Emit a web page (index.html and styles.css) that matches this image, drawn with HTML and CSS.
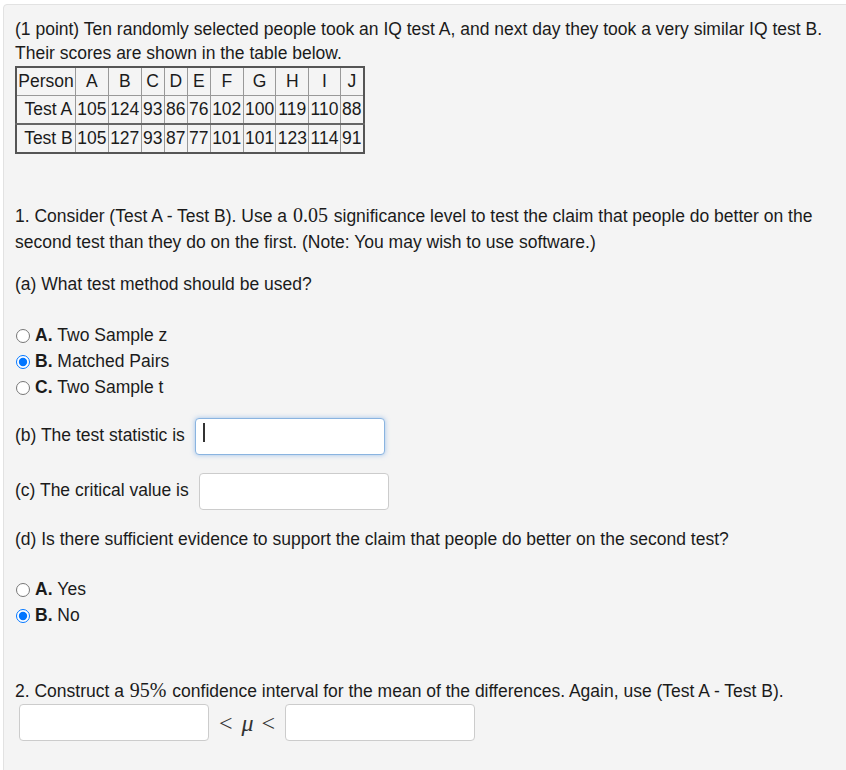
FILE: index.html
```html
<!DOCTYPE html>
<html lang="en">
<head>
    <meta charset="UTF-8">
    <title>IQ test - matched pairs</title>
    <link rel="stylesheet" href="styles.css">
</head>
<body>
    <div class="problem">
        <p class="intro">(1 point) Ten randomly selected people took an IQ test A, and next day they took a very similar IQ test B. Their scores are shown in the table below.</p>

        <table class="scores">
            <tr><td>Person</td><td>A</td><td>B</td><td>C</td><td>D</td><td>E</td><td>F</td><td>G</td><td>H</td><td>I</td><td>J</td></tr>
            <tr class="row-a"><td>&nbsp;Test A</td><td>105</td><td>124</td><td>93</td><td>86</td><td>76</td><td>102</td><td>100</td><td>119</td><td>110</td><td>88</td></tr>
            <tr class="row-b"><td>&nbsp;Test B</td><td>105</td><td>127</td><td>93</td><td>87</td><td>77</td><td>101</td><td>101</td><td>123</td><td>114</td><td>91</td></tr>
        </table>

        <p class="part-one">1. Consider (Test A - Test B). Use a <span class="math">0.05</span> significance level to test the claim that people do better on the second test than they do on the first. (Note: You may wish to use software.)</p>

        <p class="question">(a) What test method should be used?</p>
        <div class="choices">
            <label class="choice"><input type="radio" name="metodo"><b>A.</b>&nbsp;Two Sample z</label>
            <label class="choice"><input type="radio" name="metodo" checked><b>B.</b>&nbsp;Matched Pairs</label>
            <label class="choice"><input type="radio" name="metodo"><b>C.</b>&nbsp;Two Sample t</label>
        </div>

        <div class="answer-row row-stat">
            <span>(b) The test statistic is</span>
            <span class="box-wrap">
                <input type="text" class="answer focused">
                <span class="caret"></span>
            </span>
        </div>

        <div class="answer-row row-crit">
            <span>(c) The critical value is</span>
            <input type="text" class="answer">
        </div>

        <p class="question q-d">(d) Is there sufficient evidence to support the claim that people do better on the second test?</p>
        <div class="choices choices-d">
            <label class="choice"><input type="radio" name="evidencia"><b>A.</b>&nbsp;Yes</label>
            <label class="choice"><input type="radio" name="evidencia" checked><b>B.</b>&nbsp;No</label>
        </div>

        <p class="part-two">2. Construct a <span class="math">95%</span> confidence interval for the mean of the differences. Again, use (Test A - Test B).</p>
        <div class="interval">
            <input type="text" class="answer">
            <span class="math between"><span class="rel">&lt;</span><i>μ</i><span class="rel">&lt;</span></span>
            <input type="text" class="answer">
        </div>
    </div>
</body>
</html>
```

FILE: styles.css
```css
/* Reset básico */
* {
    margin: 0;
    padding: 0;
    box-sizing: border-box;
}

html, body {
    overflow: hidden;
}

body {
    font-family: "Liberation Sans", Arial, sans-serif;
    font-size: 17.5px;
    line-height: 24px;
    color: #1b1b1b;
    background-color: #ffffff;
    padding: 4px 0 0 3px;
    width: 846px;
    height: 770px;
}

/* Painel do problema */
.problem {
    background-color: #f4f4f4;
    border: 1px solid #e2e2e2;
    border-radius: 4px 0 0 0;
    width: 846px;
    height: 800px;
    padding: 12px 11px 0 11px;
}

.math {
    font-family: "Liberation Serif", "Times New Roman", serif;
    font-size: 20px;
    line-height: 1;
    margin: 0 1px;
}

.math i {
    font-style: italic;
}

/* Tabela de notas */
.scores {
    border-collapse: collapse;
    border: 2px solid #555;
    margin-top: 1px;
}

.scores td {
    border: 1px solid #999;
    padding: 4px 1.3px;
    line-height: 19px;
    text-align: center;
    white-space: nowrap;
}

.scores .row-b td {
    border-top: 2px solid #666;
}

.part-one {
    margin-top: 49px;
    line-height: 26px;
}

.question {
    margin-top: 17px;
}

/* Alternativas */
.choices {
    margin-top: 26px;
    display: flex;
    flex-direction: column;
}

.choice {
    display: flex;
    align-items: center;
    height: 26px;
}

.choice input {
    width: 14px;
    height: 14px;
    margin: 1px 5px 0 1px;
}

.choice b {
    font-weight: bold;
}

/* Campos de resposta */
.answer-row {
    display: flex;
    align-items: center;
    gap: 10px;
}

.answer-row span {
    margin-top: -4px;
}

.row-stat {
    margin-top: 18px;
}

.row-crit {
    margin-top: 18px;
}

.answer {
    width: 190px;
    height: 37px;
    border: 1px solid #cccccc;
    border-radius: 4px;
    background-color: #ffffff;
    font-size: 17px;
    padding: 0 6px;
}

.box-wrap {
    position: relative;
    display: block;
    margin-top: 0 !important;
}

.answer.focused {
    border-color: #8ab4e0;
    box-shadow: 0 0 5px rgba(102, 160, 230, 0.6);
}

.caret {
    position: absolute;
    left: 8px;
    top: 9px;
    width: 2px;
    height: 19px;
    background-color: #333;
}

.q-d {
    margin-top: 17px;
}

.choices-d {
    margin-top: 25px;
}

.part-two {
    margin-top: 50px;
    line-height: 26px;
}

.interval {
    display: flex;
    align-items: center;
    gap: 10px;
    margin-top: 0;
    padding-left: 4px;
}

.between {
    color: #333;
    font-size: 24px;
    display: flex;
    align-items: center;
    margin: 0;
}

.between i {
    margin: 0 8px 0 9px;
}
```
